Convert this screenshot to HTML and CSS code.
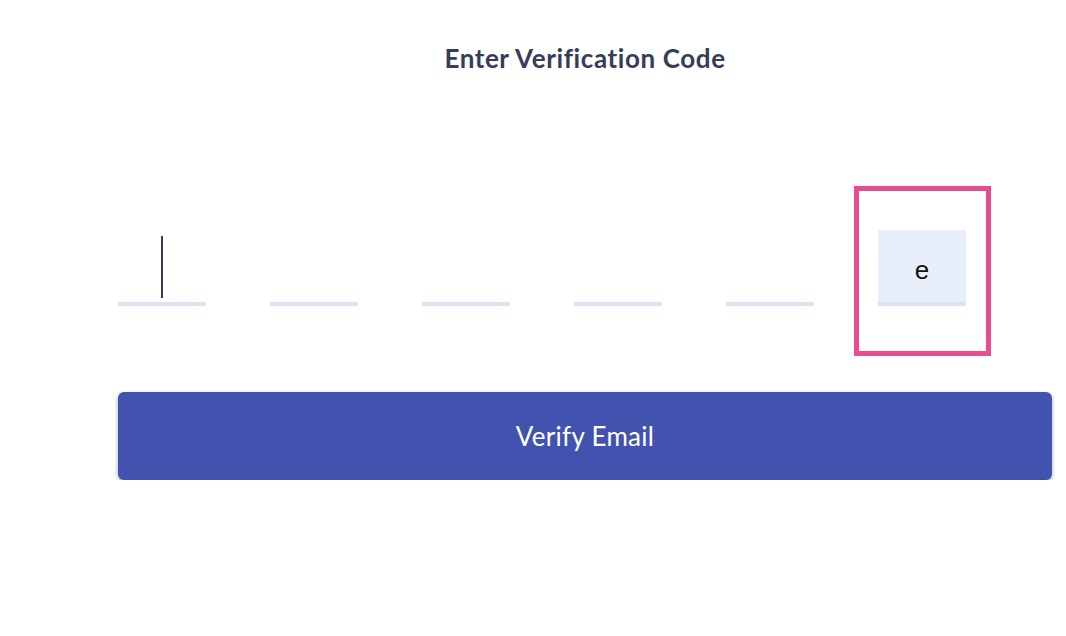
FILE: index.html
```html
<!DOCTYPE html>
<html>
<head>
<meta charset="utf-8">
<link rel="stylesheet" href="styles.css">
</head>
<body>
<div class="wrap">
  <h1 class="title">Enter Verification Code</h1>
  <div class="codes">
    <div class="cell"><span class="caret"></span></div>
    <div class="cell"></div>
    <div class="cell"></div>
    <div class="cell"></div>
    <div class="cell"></div>
    <div class="cell filled">e<span class="highlight"></span></div>
  </div>
  <button class="verify">Verify Email</button>
</div>
</body>
</html>
```
FILE: styles.css
```css
html, body {
  margin: 0;
  padding: 0;
  background: #ffffff;
}
.wrap {
  width: 934px;
  margin-left: 118px;
  display: flex;
  flex-direction: column;
  font-family: Lato, "Open Sans", sans-serif;
}
.title {
  margin: 42px 0 0 0;
  height: 32px;
  line-height: 32px;
  text-align: center;
  font-size: 26px;
  font-weight: 700;
  letter-spacing: 0.6px;
  color: #353d58;
}
.codes {
  margin-top: 156px;
  display: flex;
  gap: 64px;
}
.cell {
  position: relative;
  width: 88px;
  height: 72px;
  border-bottom: 4px solid #dde1f0;
  display: flex;
  align-items: center;
  justify-content: center;
  font-family: "Liberation Sans", Arial, sans-serif;
  font-size: 26px;
  color: #111111;
}
.cell.filled {
  background: #e8effb;
  padding-top: 8px;
  box-sizing: content-box;
  height: 64px;
}
.caret {
  width: 2px;
  height: 62px;
  background: #353d58;
  margin-top: 2px;
}
.highlight {
  position: absolute;
  left: -24px;
  top: -44px;
  width: 137px;
  height: 170px;
  box-sizing: border-box;
  border: 5px solid #ea4a8f;
}
.verify {
  margin-top: 86px;
  height: 88px;
  width: 934px;
  border: none;
  border-radius: 6px;
  background: #4152af;
  color: #ffffff;
  font-family: Lato, "Open Sans", sans-serif;
  font-size: 26px;
  letter-spacing: 0.3px;
  box-shadow: 0 2px 4px rgba(0, 0, 0, 0.35);
  cursor: pointer;
}
```
